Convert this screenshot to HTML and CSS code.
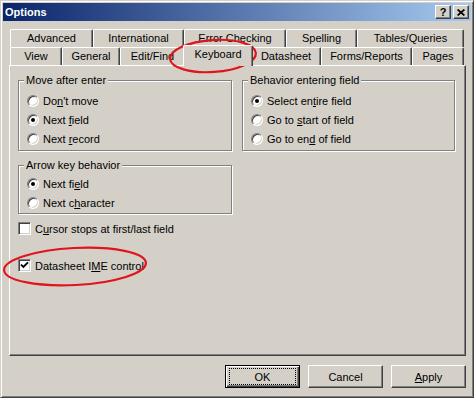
FILE: index.html
```html
<!DOCTYPE html>
<html>
<head>
<meta charset="utf-8">
<title>Options</title>
<link rel="stylesheet" href="styles.css">
</head>
<body>
<div class="window">
  <div class="titlebar">
    <span class="title">Options</span>
    <div class="tb-buttons">
      <span class="tb-btn help">?</span>
      <span class="tb-btn close"><svg width="8" height="7" viewBox="0 0 8 7"><path d="M0.6 0.5 L7.4 6.5 M7.4 0.5 L0.6 6.5" stroke="#000" stroke-width="1.7" fill="none"/></svg></span>
    </div>
  </div>
  <div class="dialog">
    <div class="tabs">
      <div class="tabrow">
        <div class="tab t-advanced">Advanced</div>
        <div class="tab t-international">International</div>
        <div class="tab t-error">Error Checking</div>
        <div class="tab t-spelling">Spelling</div>
        <div class="tab t-tables">Tables/Queries</div>
      </div>
      <div class="tabrow">
        <div class="tab t-view">View</div>
        <div class="tab t-general">General</div>
        <div class="tab t-edit">Edit/Find</div>
        <div class="tab t-keyboard selected">Keyboard</div>
        <div class="tab t-datasheet">Datasheet</div>
        <div class="tab t-forms">Forms/Reports</div>
        <div class="tab t-pages">Pages</div>
      </div>
    </div>
    <div class="panel">
      <div class="groups">
        <div class="group">
          <span class="legend">Move after enter</span>
          <div class="group-body">
            <div class="opt"><span class="radio"></span><span>Do<u>n</u>'t move</span></div>
            <div class="opt"><span class="radio checked"></span><span>Next <u>f</u>ield</span></div>
            <div class="opt"><span class="radio"></span><span>Next <u>r</u>ecord</span></div>
          </div>
        </div>
        <div class="group">
          <span class="legend">Behavior entering field</span>
          <div class="group-body">
            <div class="opt"><span class="radio checked"></span><span>Select en<u>t</u>ire field</span></div>
            <div class="opt"><span class="radio"></span><span>Go to <u>s</u>tart of field</span></div>
            <div class="opt"><span class="radio"></span><span>Go to en<u>d</u> of field</span></div>
          </div>
        </div>
      </div>
      <div class="group arrow">
        <span class="legend">Arrow key behavior</span>
        <div class="group-body">
          <div class="opt"><span class="radio checked"></span><span>Next fi<u>e</u>ld</span></div>
          <div class="opt"><span class="radio"></span><span>Next c<u>h</u>aracter</span></div>
        </div>
      </div>
      <div class="check-row"><span class="checkbox"></span><span>C<u>u</u>rsor stops at first/last field</span></div>
      <div class="check-row ime"><span class="checkbox"><svg width="11" height="11" viewBox="0 0 11 11"><path d="M2 4.6 L4.4 7 L9 2.4" stroke="#000" stroke-width="1.9" fill="none"/></svg></span><span>Datasheet I<u>M</u>E control</span></div>
    </div>
    <div class="buttons">
      <button class="btn default"><span class="focus">OK</span></button>
      <button class="btn">Cancel</button>
      <button class="btn"><u>A</u>pply</button>
    </div>
  </div>
  <svg class="marks" width="474" height="398" viewBox="0 0 474 398">
    <ellipse cx="213" cy="56" rx="43" ry="16" transform="rotate(-4 213 56)" fill="none" stroke="#e0141c" stroke-width="2.2"/>
    <ellipse cx="75" cy="266.5" rx="71" ry="18.5" transform="rotate(-3 75 266.5)" fill="none" stroke="#e0141c" stroke-width="2.2"/>
  </svg>
</div>
</body>
</html>
```

FILE: styles.css
```css
* { box-sizing: border-box; }
html, body { margin: 0; padding: 0; }
body {
  background: #d4d0c8;
  font-family: "Liberation Sans", Arial, sans-serif;
  font-size: 11px;
  color: #000;
}
.window {
  position: relative;
  width: 474px;
  height: 398px;
  background: #d4d0c8;
  border: 1px solid;
  border-color: #d4d0c8 #404040 #404040 #d4d0c8;
  padding: 2px;
  box-shadow: inset 1px 1px 0 #fff, inset -1px -1px 0 #808080;
  display: flex;
  flex-direction: column;
}
.titlebar {
  height: 18px;
  flex: none;
  display: flex;
  align-items: center;
  justify-content: space-between;
  padding: 0 2px;
  background: linear-gradient(to right, #0a246a, #a6caf0);
}
.title { color: #fff; font-weight: bold; font-size: 11px; }
.tb-buttons { display: flex; gap: 2px; }
.tb-btn {
  width: 16px;
  height: 14px;
  display: flex;
  align-items: center;
  justify-content: center;
  background: #d4d0c8;
  border: 1px solid;
  border-color: #fff #404040 #404040 #fff;
  box-shadow: inset -1px -1px 0 #808080;
  font-weight: bold;
  font-size: 11px;
  line-height: 1;
}
.dialog {
  flex: 1;
  display: flex;
  flex-direction: column;
  padding: 8px 5px 7px 6px;
}
.tabs { margin: 0 2px 0 1px; flex: none; }
.tabrow { display: flex; height: 18px; }
.tab {
  flex: none;
  padding: 0;
  text-align: center;
  white-space: nowrap;
  line-height: 17px;
  border-top: 1px solid #fff;
  border-left: 1px solid #fff;
  border-right: 1px solid #404040;
  box-shadow: inset -1px 0 0 #808080;
  border-radius: 2px 2px 0 0;
}
.t-advanced { width: 83px; }
.t-international { width: 91px; }
.t-error { width: 102px; }
.t-spelling { width: 71px; }
.t-tables { width: 107px; }
.t-view { width: 52px; }
.t-general { width: 58px; }
.t-edit { width: 65px; }
.t-keyboard { width: 66px; }
.t-datasheet { width: 70px; }
.t-forms { width: 91px; }
.t-pages { width: 52px; }
.tab.selected {
  position: relative;
  z-index: 1;
  width: 70px;
  height: 21px;
  margin: -2px -2px -1px;
  background: #d4d0c8;
}
.panel {
  flex: 1;
  border: 1px solid;
  border-color: #fff #404040 #404040 #fff;
  box-shadow: inset -1px -1px 0 #808080;
  padding: 14px 8px 8px;
}
.groups {
  display: grid;
  grid-template-columns: 214px 213px;
  column-gap: 10px;
}
.group {
  border: 1px solid #808080;
  box-shadow: inset 1px 1px 0 #fff, 1px 1px 0 #fff;
  padding: 0 8px 2px;
}
.legend {
  display: block;
  width: fit-content;
  margin: -7px 0 0 -3px;
  padding: 0 2px;
  line-height: 13px;
  background: #d4d0c8;
}
.group-body { padding-top: 4px; }
.group.arrow { width: 214px; margin-top: 14px; padding-bottom: 1px; }
.group.arrow .group-body { padding-top: 2px; }
.opt {
  display: flex;
  align-items: center;
  gap: 4px;
  height: 19px;
  white-space: nowrap;
}
.radio {
  flex: none;
  position: relative;
  width: 12px;
  height: 12px;
  border-radius: 50%;
  background: #fff;
  border: 1px solid;
  border-color: #808080 #fff #fff #808080;
  box-shadow: inset 1px 1px 0 #404040, inset -1px -1px 0 #d4d0c8;
}
.radio.checked::after {
  content: "";
  position: absolute;
  left: 3px;
  top: 3px;
  width: 4px;
  height: 4px;
  border-radius: 50%;
  background: #000;
}
.check-row {
  display: flex;
  align-items: center;
  gap: 4px;
  height: 19px;
  margin-top: 5px;
  white-space: nowrap;
}
.check-row.ime { margin-top: 18px; }
.checkbox {
  flex: none;
  width: 13px;
  height: 13px;
  display: flex;
  align-items: center;
  justify-content: center;
  background: #fff;
  border: 1px solid;
  border-color: #808080 #fff #fff #808080;
  box-shadow: inset 1px 1px 0 #404040, inset -1px -1px 0 #d4d0c8;
}
.buttons {
  flex: none;
  display: flex;
  justify-content: flex-end;
  gap: 8px;
  margin-top: 9px;
}
.btn {
  width: 75px;
  height: 23px;
  font-family: inherit;
  font-size: 11px;
  color: #000;
  background: #d4d0c8;
  border: 1px solid;
  border-color: #fff #404040 #404040 #fff;
  box-shadow: inset -1px -1px 0 #808080;
  padding: 0;
  margin: 0;
  display: flex;
  align-items: center;
  justify-content: center;
}
.btn.default {
  border: 1px solid #000;
  box-shadow: inset 1px 1px 0 #fff, inset -1px -1px 0 #404040, inset -2px -2px 0 #808080;
}
.focus {
  width: 67px;
  height: 17px;
  border: 1px dotted #000;
  display: flex;
  align-items: center;
  justify-content: center;
}
.marks {
  position: absolute;
  left: -1px;
  top: -1px;
  pointer-events: none;
}
```
